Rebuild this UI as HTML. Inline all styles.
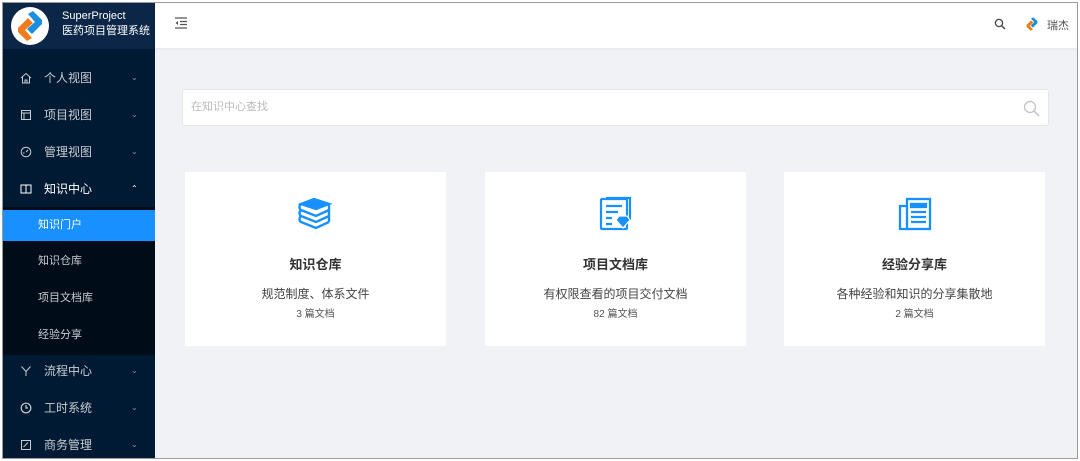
<!DOCTYPE html>
<html><head><meta charset="utf-8"><style>
*{margin:0;padding:0;box-sizing:border-box}
body{width:1080px;height:461px;background:#fff;font-family:"Liberation Sans","Noto Sans CJK SC",sans-serif;position:relative;overflow:hidden}
.frame{position:absolute;left:2px;top:2px;width:1076px;height:457px;border:1px solid #9a9a9a;background:#f0f2f5;overflow:hidden}
.side{position:absolute;left:0;top:0;width:152px;height:100%;background:#001a33}
.logo{height:46px;background:#0b2647;position:relative}
.logo .t{position:absolute;left:59px;top:6px;color:#fff;font-size:11px;line-height:15px}
.item{position:absolute;left:0;width:152px;height:36px;color:#c8ccd2;font-size:12px;line-height:36px}
.item svg{position:absolute;left:17px;top:12px}
.item .tx{position:absolute;left:41px}
.item .ar{position:absolute;left:128px;font-size:8px;color:#8a95a3}
.sub{position:absolute;left:0;top:204px;width:152px;height:148px;background:#000c17}
.sub div{height:37px;line-height:34px;padding-left:35px;color:#c8ccd2;font-size:11px}
.sub .act{background:#1890ff;color:#fff;height:31px;line-height:31px;margin-top:3px;margin-bottom:3px}
.hdr{position:absolute;left:152px;top:0;right:0;height:45px;background:#fff;box-shadow:0 1px 3px rgba(0,0,0,.06)}
.search{position:absolute;left:179px;top:86px;width:867px;height:37px;background:#fff;border:1px solid #e6e6e6;border-radius:3px;color:#bbb;font-size:11px;line-height:35px;padding-left:8px}
.card{position:absolute;top:169px;width:261px;height:174px;background:#fff;text-align:center}
.card h3,.card p,.card small{position:absolute;left:0;width:100%;display:block}
.card h3{top:82px;font-size:13px;color:#333;font-weight:bold}
.card p{top:113px;font-size:12px;color:#444}
.card small{top:133px;font-size:10px;color:#555}
.card svg{position:absolute;top:24px;left:113px}
</style></head><body><div class="frame">
<div class="side">
 <div class="logo">
  <svg style="position:absolute;left:7px;top:3px" width="40" height="40" viewBox="0 0 40 40"><circle cx="20" cy="20" r="19" fill="#fff"/><path d="M8 22 L18 12 L23 17 L15 24 L22 32 L17 35 L8 26Z" fill="#f07d1a"/><path d="M32 18 L22 28 L17 23 L25 16 L18 8 L23 5 L32 14Z" fill="#1a8fe0"/></svg>
  <div class="t">SuperProject<br>医药项目管理系统</div>
 </div>
 <div class="item" style="top:57px"><svg width="12" height="12" viewBox="0 0 12 12" fill="none" stroke="#c8ccd2"><path d="M1 6L6 1.5L11 6M2.5 5V11H9.5V5M5 11V8H7V11"/></svg><span class="tx">个人视图</span><span class="ar">⌄</span></div>
 <div class="item" style="top:94px"><svg width="12" height="12" viewBox="0 0 12 12" fill="none" stroke="#c8ccd2"><rect x="1.5" y="1.5" width="9" height="9"/><path d="M1.5 4H10.5M4 4V10.5"/></svg><span class="tx">项目视图</span><span class="ar">⌄</span></div>
 <div class="item" style="top:131px"><svg width="12" height="12" viewBox="0 0 12 12" fill="none" stroke="#c8ccd2"><circle cx="6" cy="6" r="4.8"/><path d="M6 6L8 4M3 7H4.5"/></svg><span class="tx">管理视图</span><span class="ar">⌄</span></div>
 <div class="item" style="top:168px;color:#fff"><svg width="12" height="12" viewBox="0 0 12 12" fill="none" stroke="#fff"><path d="M1 2H5.5L6 3L6.5 2H11V10H1Z M6 3V10"/></svg><span class="tx">知识中心</span><span class="ar" style="color:#fff">⌃</span></div>
 <div class="sub"><div class="act">知识门户</div><div>知识仓库</div><div>项目文档库</div><div>经验分享</div></div>
 <div class="item" style="top:350px"><svg width="12" height="12" viewBox="0 0 12 12" fill="none" stroke="#c8ccd2"><path d="M1.5 1.5L6 6.5L10.5 1.5M6 6.5V11"/></svg><span class="tx">流程中心</span><span class="ar">⌄</span></div>
 <div class="item" style="top:387px"><svg width="12" height="12" viewBox="0 0 12 12" fill="none" stroke="#c8ccd2" stroke-width="1.2"><circle cx="6" cy="6" r="4.8"/><path d="M6 3V6H8"/></svg><span class="tx">工时系统</span><span class="ar">⌄</span></div>
 <div class="item" style="top:424px"><svg width="12" height="12" viewBox="0 0 12 12" fill="none" stroke="#c8ccd2"><rect x="1.5" y="1.5" width="9" height="9"/><path d="M3.5 8L8 3.5"/></svg><span class="tx">商务管理</span><span class="ar">⌄</span></div>
</div>
<div class="hdr">
 <svg style="position:absolute;left:19px;top:14px" width="14" height="12" viewBox="0 0 14 12"><path d="M1 1H13M6 4.5H13M6 7.5H13M1 11H13" stroke="#555" stroke-width="1.2"/><path d="M4 4L1.5 6L4 8Z" fill="#555"/></svg>
 <svg style="position:absolute;left:839px;top:15px" width="12" height="12" viewBox="0 0 12 12"><circle cx="5" cy="5" r="3.6" fill="none" stroke="#444" stroke-width="1.3"/><path d="M7.7 7.7L11 11" stroke="#444" stroke-width="1.4"/></svg>
 <svg style="position:absolute;left:868px;top:12px" width="18" height="18" viewBox="0 0 40 40"><path d="M8 22 L18 12 L23 17 L15 24 L22 32 L17 35 L8 26Z" fill="#f07d1a"/><path d="M32 18 L22 28 L17 23 L25 16 L18 8 L23 5 L32 14Z" fill="#1a8fe0"/></svg>
 <span style="position:absolute;left:892px;top:14px;font-size:11px;color:#555">瑞杰</span>
</div>
<div class="search">在知识中心查找
 <svg style="position:absolute;right:8px;top:10px" width="17" height="17" viewBox="0 0 17 17"><circle cx="7" cy="7" r="5.5" fill="none" stroke="#c8c8c8" stroke-width="1.4"/><path d="M11 11L16 16" stroke="#c8c8c8" stroke-width="1.6"/></svg>
</div>
<div class="card" style="left:182px">
 <svg width="36" height="36" viewBox="0 0 36 36" fill="none" stroke="#1890ff" stroke-width="2.4"><path d="M3 8L16 3L31 8L18 13Z" fill="#1890ff"/><path d="M3 8C1 10 1 13 3 14L18 20L31 14"/><path d="M3 14C1 16 1 19 3 20L18 26L31 20"/><path d="M3 20C1 22 1 25 3 26L18 32L31 26"/><path d="M31 8V14V20V26"/></svg>
 <h3>知识仓库</h3><p>规范制度、体系文件</p><small>3 篇文档</small></div>
<div class="card" style="left:482px">
 <svg width="36" height="36" viewBox="0 0 36 36" fill="none" stroke="#1890ff" stroke-width="2.2"><rect x="3" y="3" width="26" height="30" rx="1"/><path d="M8 2H32V24"/><path d="M8 10H24M8 16H20M8 22H14M8 28H14"/><path d="M18 24L21 20H29L32 24L25 32Z" fill="#1890ff" stroke="#fff" stroke-width="1.2"/></svg>
 <h3>项目文档库</h3><p>有权限查看的项目交付文档</p><small>82 篇文档</small></div>
<div class="card" style="left:781px">
 <svg width="36" height="36" viewBox="0 0 36 36" fill="none" stroke="#1890ff" stroke-width="2.3"><rect x="10" y="3" width="23" height="30"/><path d="M10 10H3V33H10"/><rect x="14" y="8" width="15" height="3" fill="#1890ff"/><path d="M14 16H29M14 21H29M14 26H29"/></svg>
 <h3>经验分享库</h3><p>各种经验和知识的分享集散地</p><small>2 篇文档</small></div>
</div></body></html>
